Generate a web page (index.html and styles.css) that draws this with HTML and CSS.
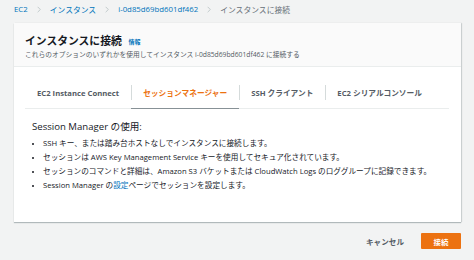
FILE: index.html
```html
<!DOCTYPE html>
<html lang="ja">
<head>
  <meta charset="UTF-8" />
  <title>インスタンスに接続</title>
  <link rel="stylesheet" href="styles.css">
</head>
<body>
  <nav class="crumbs">
    <a href="#">EC2</a>
    <svg class="chev" viewBox="0 0 6 10"><path d="M1 1l4 4-4 4" /></svg>
    <a href="#">インスタンス</a>
    <svg class="chev" viewBox="0 0 6 10"><path d="M1 1l4 4-4 4" /></svg>
    <a href="#">i-0d85d69bd601df462</a>
    <svg class="chev" viewBox="0 0 6 10"><path d="M1 1l4 4-4 4" /></svg>
    <span class="current">インスタンスに接続</span>
  </nav>

  <div class="card">
    <div class="card-head">
      <h1>インスタンスに接続 <a class="info" href="#">情報</a></h1>
      <p class="sub">これらのオプションのいずれかを使用してインスタンス i-0d85d69bd601df462 に接続する</p>
    </div>
    <div class="card-body">
      <ul class="tabs">
        <li class="tab">EC2 Instance Connect</li>
        <li class="tab active">セッションマネージャー</li>
        <li class="tab">SSH クライアント</li>
        <li class="tab">EC2 シリアルコンソール</li>
      </ul>
      <div class="panel">
        <h2>Session Manager の使用:</h2>
        <ul class="points">
          <li>SSH キー、または踏み台ホストなしでインスタンスに接続します。</li>
          <li>セッションは AWS Key Management Service キーを使用してセキュア化されています。</li>
          <li>セッションのコマンドと詳細は、Amazon S3 バケットまたは CloudWatch Logs のロググループに記録できます。</li>
          <li>Session Manager の<a href="#">設定</a>ページでセッションを設定します。</li>
        </ul>
      </div>
    </div>
  </div>

  <div class="actions">
    <button class="btn-link">キャンセル</button>
    <button class="btn-primary">接続</button>
  </div>
</body>
</html>
```

FILE: styles.css
```css
html, body { height: 100%; }
body { margin: 0; display: flex; flex-direction: column; background: #f2f3f3; font-family: "Open Sans", "Noto Sans CJK JP", sans-serif; color: #16191f; }
a { color: #0073bb; text-decoration: none; }

.crumbs { flex: none; display: flex; align-items: center; gap: 9px; height: 18px; padding: 0 14px; font-size: 7.8px; }
.crumbs .current { color: #687078; }
.chev { width: 4px; height: 7px; fill: none; stroke: #aab7b8; stroke-width: 1; }

.card { flex: 1; display: flex; flex-direction: column; margin: 5px 13px 0 14px; background: #fff; box-shadow: 0 1px 1px 0 rgba(0,28,36,0.25), 1px 0 1px 0 rgba(0,28,36,0.12); }
.card-head { flex: none; height: 43px; padding: 0 11px; background: #fafafa; border-bottom: 1px solid #eaeded; }
h1 { margin: 0; padding-top: 11px; font-size: 10.8px; line-height: 13px; font-weight: 700; }
h1 .info { margin-left: 4px; font-size: 6px; vertical-align: 1px; }
.sub { margin: 1px 0 0; font-size: 6.75px; line-height: 10px; color: #545b64; }

.card-body { flex: 1; padding: 10px 12px 0 11px; }
.tabs { display: flex; margin: 0; padding: 0; list-style: none; border-bottom: 1px solid #eaeded; height: 31px; }
.tab { position: relative; display: flex; align-items: center; padding: 0 12px; margin-bottom: -1px; font-size: 7.7px; font-weight: 700; color: #545b64; border-bottom: 1px solid transparent; }
.tab + .tab::before { content: ""; position: absolute; left: 0; top: 8px; bottom: 8px; width: 1px; background: #d5dbdb; }
.tab.active { color: #ec7211; border-bottom-color: #879196; }

.panel { padding: 11px 0 0 7px; }
h2 { margin: 0; font-size: 9.6px; line-height: 14px; font-weight: 400; }
.points { margin: 2px 0 0; padding: 0 0 0 11px; font-size: 7.65px; line-height: 14px; }
.points li::marker { font-size: 7px; }

.actions { flex: none; display: flex; justify-content: flex-end; align-items: center; gap: 14px; height: 38px; padding-right: 13px; }
.btn-link { border: none; background: none; padding: 0 3px; font: 700 7.6px "Open Sans", "Noto Sans CJK JP", sans-serif; color: #545b64; }
.btn-primary { width: 40px; height: 16px; border: none; border-radius: 1px; background: #ec7211; color: #fff; font: 700 7.4px "Open Sans", "Noto Sans CJK JP", sans-serif; }
```
